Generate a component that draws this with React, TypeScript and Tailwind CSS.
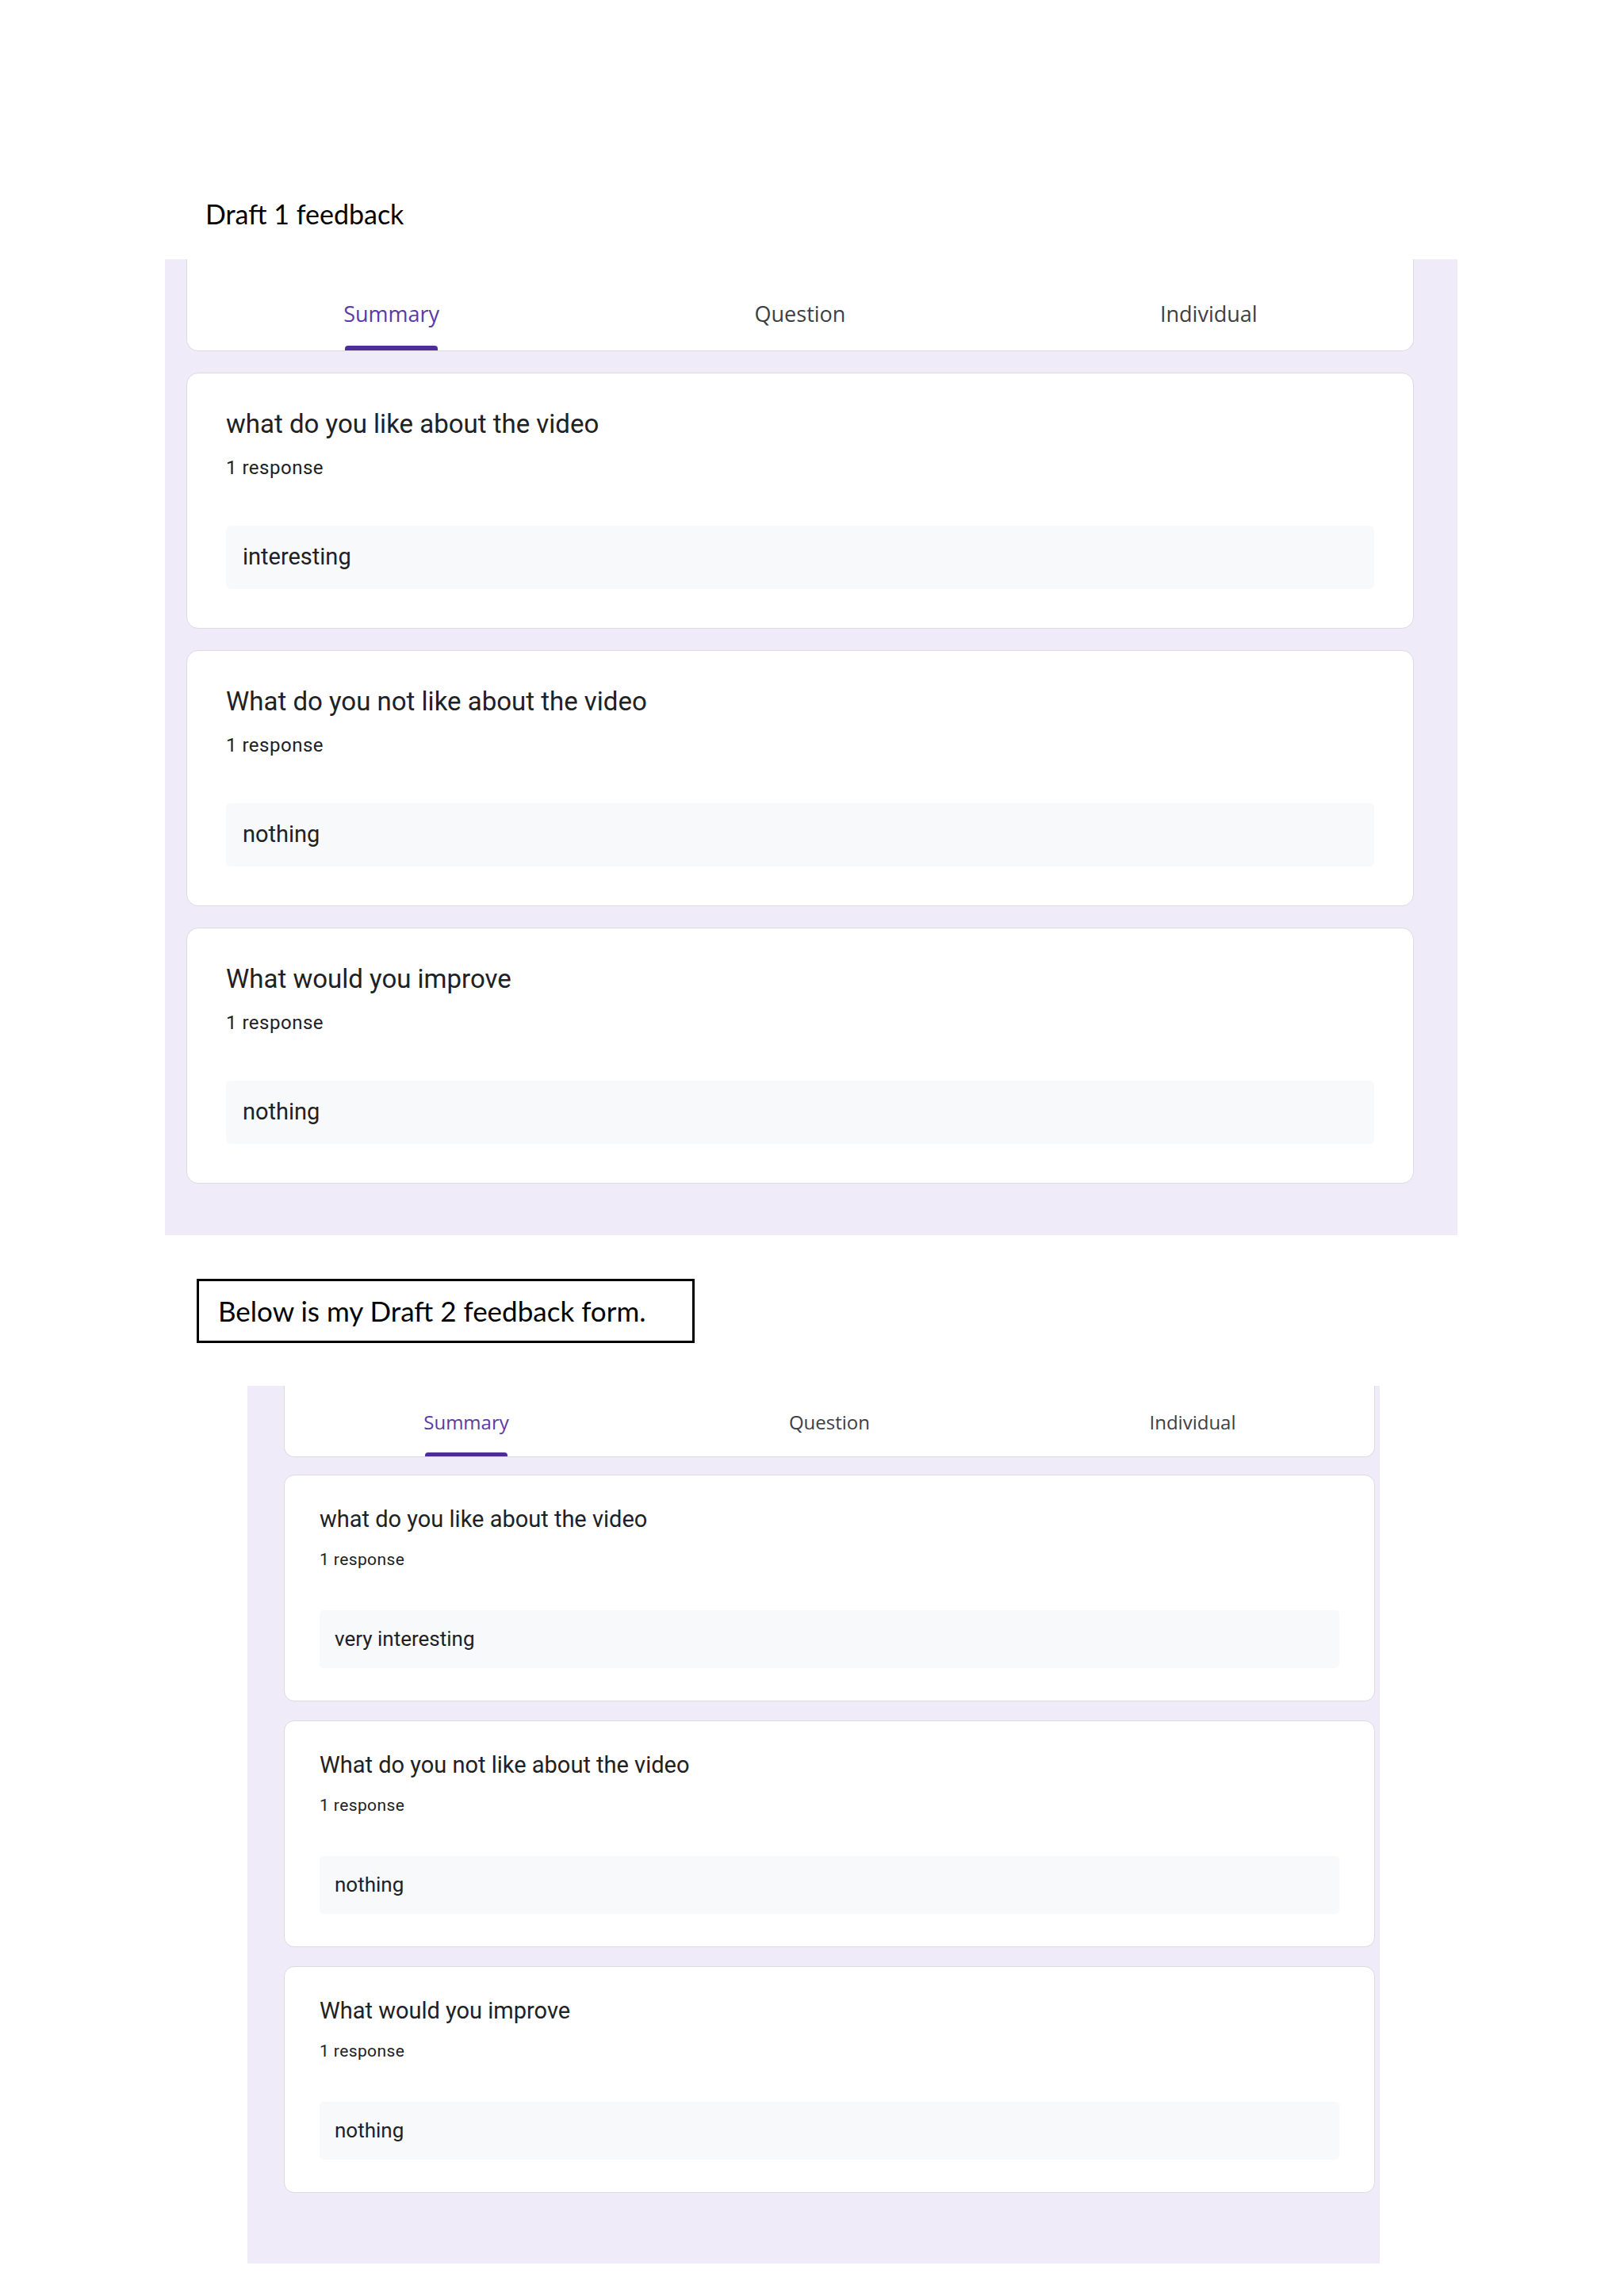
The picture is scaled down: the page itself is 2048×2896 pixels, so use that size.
import React from "react";

type V = {
  panel: string;
  tabCard: string;
  tabLabel: string;
  underline: string;
  underlineMt: string;
  list: string;
  card: string;
  q: string;
  resp: string;
  box: string;
  ans: string;
};

const A: V = {
  panel: "ml-[208px] w-[1630px] pb-[65px]",
  tabCard: "ml-[27px] w-[1548px] h-[116px] rounded-b-[15px]",
  tabLabel: "text-[27px] leading-[36px]",
  underline: "w-[117px] h-[6px] rounded-t-[4px]",
  underlineMt: "mt-[22px]",
  list: "ml-[27px] w-[1548px] mt-[27px] gap-[27px]",
  card: "h-[323px] rounded-[15px] px-[49px] pt-[44px]",
  q: "text-[33px] leading-[40px]",
  resp: "text-[24px] leading-[30px] mt-[20px] tracking-[0.5px]",
  box: "mt-[58px] h-[80px] pl-[21px] rounded-[6px]",
  ans: "text-[29px]",
};

const B: V = {
  panel: "ml-[312px] w-[1428px] pb-[89px]",
  tabCard: "ml-[46px] w-[1376px] h-[90px] rounded-b-[13px]",
  tabLabel: "text-[24px] leading-[32px]",
  underline: "w-[104px] h-[5px] rounded-t-[4px]",
  underlineMt: "mt-[22px]",
  list: "ml-[46px] w-[1376px] mt-[22px] gap-[24px]",
  card: "h-[286px] rounded-[13px] px-[44px] pt-[37px]",
  q: "text-[29px] leading-[36px]",
  resp: "text-[21px] leading-[27px] mt-[20px] tracking-[0.4px]",
  box: "mt-[50px] h-[73px] pl-[19px] rounded-[5px]",
  ans: "text-[26px]",
};

const roboto = { fontFamily: "Roboto, 'Liberation Sans', sans-serif" };

function Panel({ v, answers }: { v: V; answers: string[] }) {
  const questions = [
    "what do you like about the video",
    "What do you not like about the video",
    "What would you improve",
  ];
  const tabs = ["Summary", "Question", "Individual"];
  return (
    <div className={`bg-[#f0ebf8] ${v.panel}`}>
      <div
        className={`bg-white border border-t-0 border-[#dadce0] grid grid-cols-3 ${v.tabCard}`}
      >
        {tabs.map((t, i) => (
          <div key={t} className="flex flex-col items-center justify-end">
            <span
              className={`${v.tabLabel} font-medium ${
                i === 0 ? "text-[#5a3aa3]" : "text-[#3c4043]"
              } font-['Open_Sans',sans-serif]`}
            >
              {t}
            </span>
            <div
              className={`${v.underline} ${v.underlineMt} ${
                i === 0 ? "bg-[#4f2d99]" : "bg-transparent"
              }`}
            />
          </div>
        ))}
      </div>
      <div className={`flex flex-col ${v.list}`}>
        {questions.map((q, i) => (
          <div
            key={q}
            className={`bg-white border border-[#dadce0] flex flex-col ${v.card}`}
            style={roboto}
          >
            <div className={`${v.q} text-[#202124]`}>{q}</div>
            <div className={`${v.resp} text-[#202124]`}>1 response</div>
            <div className={`bg-[#f8f9fa] flex items-center ${v.box}`}>
              <span className={`${v.ans} text-[#202124]`}>{answers[i]}</span>
            </div>
          </div>
        ))}
      </div>
    </div>
  );
}

export default function App() {
  return (
    <div className="w-[2048px] h-[2896px] bg-white overflow-hidden">
      <div className="pt-[248px] pl-[259px] text-[34px] leading-[44px] text-black font-['Lato',sans-serif]">
        Draft 1 feedback
      </div>
      <div className="mt-[35px]">
        <Panel v={A} answers={["interesting", "nothing", "nothing"]} />
      </div>
      <div className="mt-[55px] ml-[248px] w-[628px] h-[81px] border-[3px] border-black flex items-center pl-[24px]">
        <span className="text-[35px] text-black font-['Lato',sans-serif]">
          Below is my Draft 2 feedback form.
        </span>
      </div>
      <div className="mt-[54px]">
        <Panel v={B} answers={["very interesting", "nothing", "nothing"]} />
      </div>
    </div>
  );
}
